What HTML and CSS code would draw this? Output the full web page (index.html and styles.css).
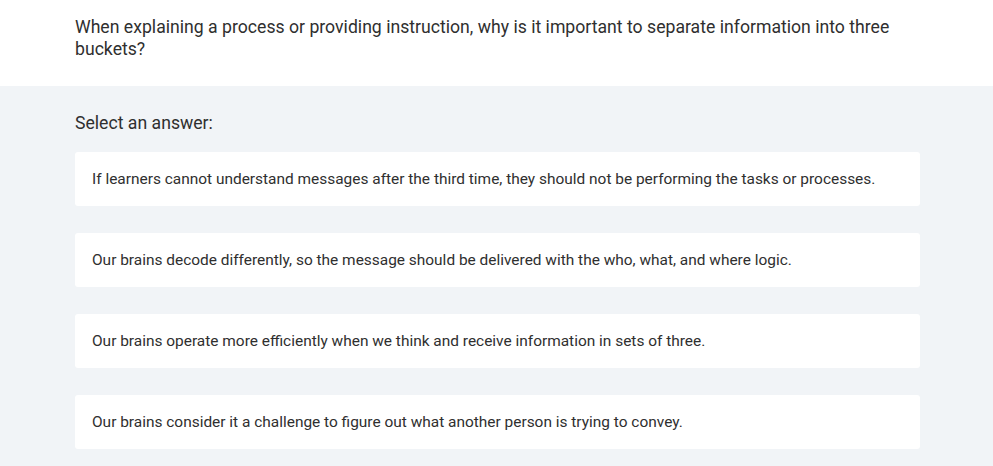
FILE: index.html
```html
<!DOCTYPE html>
<html lang="en">
<head>
  <meta charset="UTF-8">
  <meta name="viewport" content="width=device-width, initial-scale=1.0">
  <title>Quiz</title>
  <link rel="stylesheet" href="styles.css">
</head>
<body>
  <div class="question">
    <p class="question-text">When explaining a process or providing instruction, why is it important to separate information into three buckets?</p>
  </div>

  <div class="answers">
    <p class="answers-label">Select an answer:</p>
    <div class="answer-list">
      <div class="answer">If learners cannot understand messages after the third time, they should not be performing the tasks or processes.</div>
      <div class="answer">Our brains decode differently, so the message should be delivered with the who, what, and where logic.</div>
      <div class="answer">Our brains operate more efficiently when we think and receive information in sets of three.</div>
      <div class="answer">Our brains consider it a challenge to figure out what another person is trying to convey.</div>
    </div>
  </div>
</body>
</html>
```

FILE: styles.css
```css
body, html {
  font-family: Roboto, "Liberation Sans", Arial, sans-serif;
  margin: 0;
  padding: 0;
  color: #2f2f2f;
}

body {
  background-color: #f1f4f7;
  min-height: 100vh;
}

.question {
  background-color: #ffffff;
  padding: 16px 73px 26px 75px;
}

.question-text {
  width: 845px;
  margin: 0;
  font-size: 17.65px;
  line-height: 22px;
}

.answers {
  padding: 26px 73px 20px 75px;
}

.answers-label {
  margin: 0 0 18px;
  font-size: 17.65px;
  line-height: 22px;
}

.answer-list {
  display: flex;
  flex-direction: column;
  gap: 27px;
  width: 845px;
}

.answer {
  display: flex;
  align-items: center;
  height: 54px;
  padding: 0 17px;
  background-color: #ffffff;
  border-radius: 3px;
  font-size: 15.45px;
  cursor: pointer;
}
```
